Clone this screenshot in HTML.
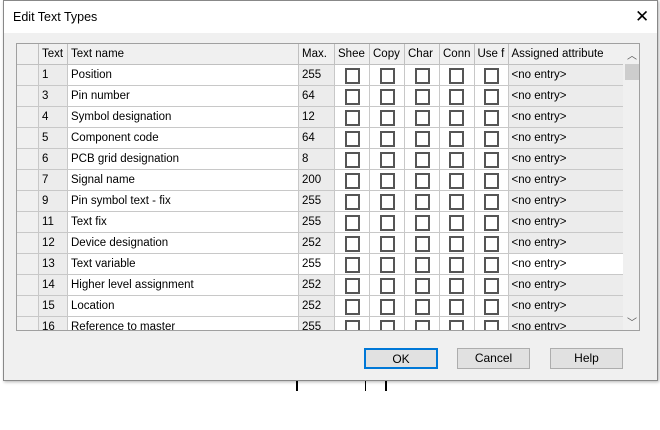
<!DOCTYPE html>
<html><head><style>
*{margin:0;padding:0;box-sizing:border-box}
body{width:660px;height:430px;background:#fff;font-family:"Liberation Sans",sans-serif;font-size:12px;color:#000;position:relative;overflow:hidden}
.dlg{position:absolute;left:3px;top:0;width:655px;height:381px;background:#f0f0f0;border:1px solid #888;box-shadow:1px 1px 3px rgba(0,0,0,.3)}
.title{position:absolute;left:0;top:0;width:100%;height:32px;background:#fff}
.title span{position:absolute;left:9px;top:9px;font-size:12.5px}
.x{position:absolute;left:631px;top:6px;font-size:17px}
.grid{position:absolute;left:12px;top:42px;width:624px;height:288px;border:1px solid #a0a0a0;background:#f0f0f0;overflow:hidden}
table{border-collapse:collapse;table-layout:fixed;position:absolute;left:-1px;top:-1px}
td{height:21px;border:1px solid #c8c8c8;padding:0 3px;white-space:nowrap;overflow:hidden;font-size:11.5px}
tr.h td{background:#f0f0f0;border-color:#c0c0c0}
td.rh{background:#f0f0f0}
td.g{background:#ececec}
td.w{background:#fff}
td.cb{background:#fff;padding:0}
.box{width:15px;height:16px;border:2px solid #555;margin:2px auto 0}
.sb{position:absolute;left:606px;top:0;width:18px;height:288px;background:#f0f0f0}
.thumb{position:absolute;left:2px;top:20px;width:14px;height:16px;background:#cdcdcd}
.btn{position:absolute;top:347px;height:21px;border:1px solid #adadad;background:#e1e1e1;text-align:center;line-height:19px}
</style></head><body>
<div style="position:absolute;left:296px;top:381px;width:2px;height:10px;background:#000"></div>
<div style="position:absolute;left:365px;top:381px;width:1px;height:10px;background:#000"></div>
<div style="position:absolute;left:385px;top:381px;width:2px;height:10px;background:#000"></div>
<div class="dlg">
<div class="title"><span>Edit Text Types</span><div class="x">✕</div></div>
<div class="grid">
<table>
<colgroup><col style="width:22px"><col style="width:29px"><col style="width:231px"><col style="width:36px"><col style="width:35px"><col style="width:35px"><col style="width:35px"><col style="width:34px"><col style="width:34px"><col style="width:115px"></colgroup>
<tr class="h"><td></td><td>Text</td><td>Text name</td><td>Max.</td><td>Shee</td><td>Copy</td><td>Char</td><td>Conn</td><td>Use f</td><td>Assigned attribute</td></tr>
<tr><td class="rh"></td><td class="g">1</td><td class="w">Position</td><td class="g">255</td><td class="cb"><div class="box"></div></td><td class="cb"><div class="box"></div></td><td class="cb"><div class="box"></div></td><td class="cb"><div class="box"></div></td><td class="cb"><div class="box"></div></td><td class="g">&lt;no entry&gt;</td></tr>
<tr><td class="rh"></td><td class="g">3</td><td class="w">Pin number</td><td class="g">64</td><td class="cb"><div class="box"></div></td><td class="cb"><div class="box"></div></td><td class="cb"><div class="box"></div></td><td class="cb"><div class="box"></div></td><td class="cb"><div class="box"></div></td><td class="g">&lt;no entry&gt;</td></tr>
<tr><td class="rh"></td><td class="g">4</td><td class="w">Symbol designation</td><td class="g">12</td><td class="cb"><div class="box"></div></td><td class="cb"><div class="box"></div></td><td class="cb"><div class="box"></div></td><td class="cb"><div class="box"></div></td><td class="cb"><div class="box"></div></td><td class="g">&lt;no entry&gt;</td></tr>
<tr><td class="rh"></td><td class="g">5</td><td class="w">Component code</td><td class="g">64</td><td class="cb"><div class="box"></div></td><td class="cb"><div class="box"></div></td><td class="cb"><div class="box"></div></td><td class="cb"><div class="box"></div></td><td class="cb"><div class="box"></div></td><td class="g">&lt;no entry&gt;</td></tr>
<tr><td class="rh"></td><td class="g">6</td><td class="w">PCB grid designation</td><td class="g">8</td><td class="cb"><div class="box"></div></td><td class="cb"><div class="box"></div></td><td class="cb"><div class="box"></div></td><td class="cb"><div class="box"></div></td><td class="cb"><div class="box"></div></td><td class="g">&lt;no entry&gt;</td></tr>
<tr><td class="rh"></td><td class="g">7</td><td class="w">Signal name</td><td class="g">200</td><td class="cb"><div class="box"></div></td><td class="cb"><div class="box"></div></td><td class="cb"><div class="box"></div></td><td class="cb"><div class="box"></div></td><td class="cb"><div class="box"></div></td><td class="g">&lt;no entry&gt;</td></tr>
<tr><td class="rh"></td><td class="g">9</td><td class="w">Pin symbol text - fix</td><td class="g">255</td><td class="cb"><div class="box"></div></td><td class="cb"><div class="box"></div></td><td class="cb"><div class="box"></div></td><td class="cb"><div class="box"></div></td><td class="cb"><div class="box"></div></td><td class="g">&lt;no entry&gt;</td></tr>
<tr><td class="rh"></td><td class="g">11</td><td class="w">Text fix</td><td class="g">255</td><td class="cb"><div class="box"></div></td><td class="cb"><div class="box"></div></td><td class="cb"><div class="box"></div></td><td class="cb"><div class="box"></div></td><td class="cb"><div class="box"></div></td><td class="g">&lt;no entry&gt;</td></tr>
<tr><td class="rh"></td><td class="g">12</td><td class="w">Device designation</td><td class="g">252</td><td class="cb"><div class="box"></div></td><td class="cb"><div class="box"></div></td><td class="cb"><div class="box"></div></td><td class="cb"><div class="box"></div></td><td class="cb"><div class="box"></div></td><td class="g">&lt;no entry&gt;</td></tr>
<tr><td class="rh"></td><td class="g">13</td><td class="w">Text variable</td><td class="w">255</td><td class="cb"><div class="box"></div></td><td class="cb"><div class="box"></div></td><td class="cb"><div class="box"></div></td><td class="cb"><div class="box"></div></td><td class="cb"><div class="box"></div></td><td class="w">&lt;no entry&gt;</td></tr>
<tr><td class="rh"></td><td class="g">14</td><td class="w">Higher level assignment</td><td class="g">252</td><td class="cb"><div class="box"></div></td><td class="cb"><div class="box"></div></td><td class="cb"><div class="box"></div></td><td class="cb"><div class="box"></div></td><td class="cb"><div class="box"></div></td><td class="g">&lt;no entry&gt;</td></tr>
<tr><td class="rh"></td><td class="g">15</td><td class="w">Location</td><td class="g">252</td><td class="cb"><div class="box"></div></td><td class="cb"><div class="box"></div></td><td class="cb"><div class="box"></div></td><td class="cb"><div class="box"></div></td><td class="cb"><div class="box"></div></td><td class="g">&lt;no entry&gt;</td></tr>
<tr><td class="rh"></td><td class="g">16</td><td class="w">Reference to master</td><td class="g">255</td><td class="cb"><div class="box"></div></td><td class="cb"><div class="box"></div></td><td class="cb"><div class="box"></div></td><td class="cb"><div class="box"></div></td><td class="cb"><div class="box"></div></td><td class="g">&lt;no entry&gt;</td></tr>
</table>
<div class="sb"><div style="position:absolute;left:4px;top:3px;font-size:10px;color:#555">︿</div><div class="thumb"></div><div style="position:absolute;left:4px;top:270px;font-size:10px;color:#555">﹀</div></div>
</div>
<div class="btn" style="left:360px;width:74px;border:2px solid #0078d7">OK</div>
<div class="btn" style="left:453px;width:73px">Cancel</div>
<div class="btn" style="left:546px;width:73px">Help</div>
</div>
</body></html>
